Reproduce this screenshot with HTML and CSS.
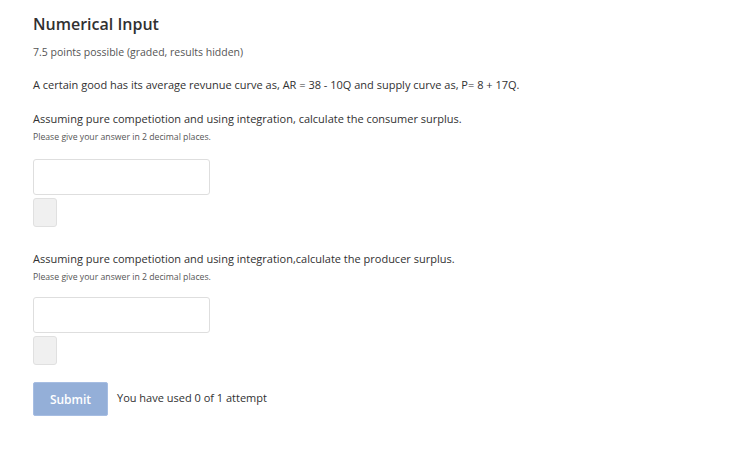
FILE: index.html
```html
<!DOCTYPE html>
<html>
<head>
<meta charset="utf-8">
<link rel="stylesheet" href="styles.css">
</head>
<body>
<div class="problem">
  <h3 class="title">Numerical Input</h3>
  <div class="points">7.5 points possible (graded, results hidden)</div>
  <p class="intro">A certain good has its average revunue curve as, AR = 38 - 10Q and supply curve as, P= 8 + 17Q.</p>
  <div class="question">
    <p class="q">Assuming pure competiotion and using integration, calculate the consumer surplus.</p>
    <div class="hint">Please give your answer in 2 decimal places.</div>
    <input class="answer" type="text">
    <div class="status"></div>
  </div>
  <div class="question second">
    <p class="q">Assuming pure competiotion and using integration,calculate the producer surplus.</p>
    <div class="hint">Please give your answer in 2 decimal places.</div>
    <input class="answer" type="text">
    <div class="status"></div>
  </div>
  <div class="actions">
    <button class="submit">Submit</button>
    <span class="attempts">You have used 0 of 1 attempt</span>
  </div>
</div>
</body>
</html>
```
FILE: styles.css
```css
html, body {
  margin: 0;
  padding: 0;
  background: #fff;
}
body {
  font-family: "Open Sans", "Liberation Sans", sans-serif;
  color: #313131;
}
.problem {
  padding: 13px 0 0 33px;
}
.title {
  margin: 0;
  font-size: 16px;
  font-weight: 600;
  line-height: 22px;
  color: #313131;
}
.points {
  margin-top: 10px;
  font-size: 10.5px;
  line-height: 14px;
  color: #555;
}
.intro {
  margin: 18px 0 0;
  font-size: 11px;
  line-height: 16px;
}
.question {
  margin-top: 18px;
}
.question.second {
  margin-top: 24px;
}
.q {
  margin: 0;
  font-size: 11px;
  line-height: 16px;
}
.hint {
  margin-top: 4px;
  font-size: 8.7px;
  line-height: 12px;
  color: #555;
}
.answer {
  display: block;
  box-sizing: border-box;
  margin: 16px 0 0;
  width: 177px;
  height: 36px;
  border: 1px solid #dedede;
  border-radius: 3px;
  background: #fff;
  padding: 0 8px;
  outline: none;
}
.second .answer {
  margin-top: 14px;
}
.status {
  box-sizing: border-box;
  margin-top: 3px;
  width: 24px;
  height: 29px;
  border: 1px solid #e0e0e0;
  border-radius: 3px;
  background: #f0f0f0;
}
.actions {
  margin-top: 17px;
  display: flex;
  align-items: center;
  gap: 9px;
}
.submit {
  width: 75px;
  height: 34px;
  border: 1px solid #a6bde2;
  border-radius: 2px;
  background: #94afd8;
  color: #fff;
  font-family: "Open Sans", "Liberation Sans", sans-serif;
  font-size: 12px;
  font-weight: 600;
  padding: 0;
}
.attempts {
  font-size: 11px;
  color: #313131;
  margin-top: -4px;
}
```
